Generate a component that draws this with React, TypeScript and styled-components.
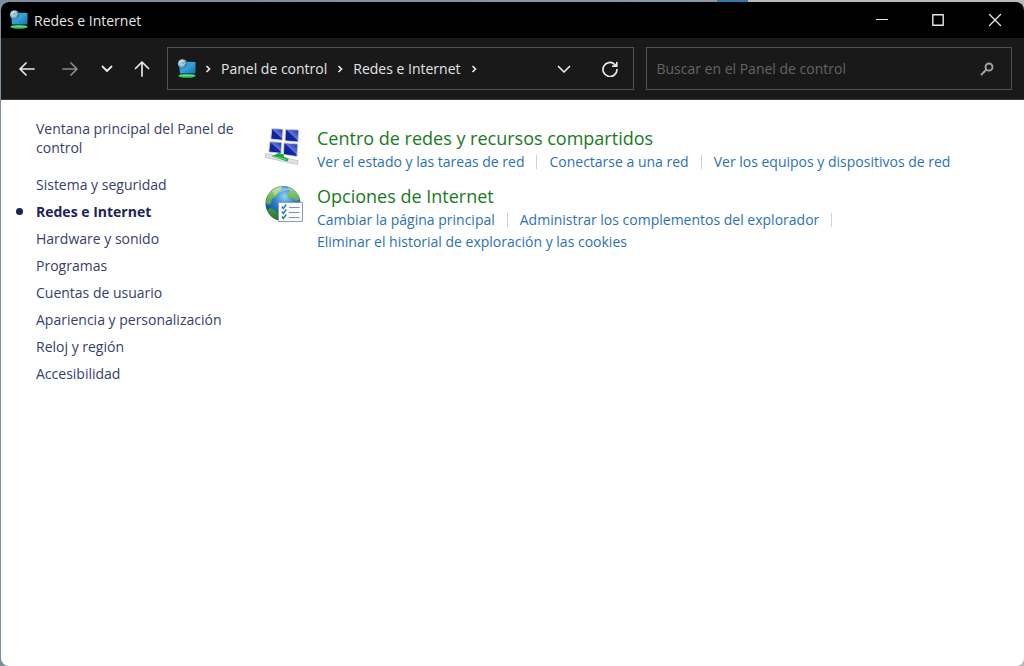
import React from "react";
import styled, { createGlobalStyle, css } from "styled-components";

const GlobalStyle = createGlobalStyle`
  * { box-sizing: border-box; }
  body { margin: 0; font-family: "Open Sans", "Noto Sans", sans-serif; font-size: 14px; }
  button, input { font: inherit; }
`;

const Desktop = styled.div`
  min-height: 100vh;
  display: flex;
  padding: 2px 0 0 1px;
  background: linear-gradient(90deg, #7b909c 0 20%, #8b9ba5 70%, #3079a8 70% 73%, #b8babc 73%);
`;

const Window = styled.div`
  flex: 1;
  min-width: 0;
  display: flex;
  flex-direction: column;
  border-radius: 8px;
  overflow: hidden;
  background: #fff;
`;

const TitleBar = styled.header`
  display: flex;
  align-items: center;
  height: 36px;
  padding-left: 8px;
  background: #000;
  color: #e4e4e4;
`;

const Title = styled.h1`
  flex: 1;
  margin: 0 0 0 5px;
  font-size: 14px;
  font-weight: 400;
`;

const IconButton = styled.button<{ $width: number; $color?: string }>`
  display: flex;
  align-items: center;
  justify-content: center;
  flex: none;
  width: ${(p) => p.$width}px;
  height: 36px;
  padding: 0;
  border: 0;
  background: transparent;
  color: ${(p) => p.$color ?? "#e8e8e8"};
`;

const Toolbar = styled.div`
  display: flex;
  align-items: center;
  height: 62px;
  padding: 0 12px 0 8px;
  background: #191919;
  border-bottom: 1px solid #3a3a3a;
`;

const Navigation = styled.nav`
  display: flex;
  flex: none;
  width: 158px;
`;

const field = css`
  display: flex;
  align-items: center;
  min-width: 0;
  height: 43px;
  border: 1px solid #535353;
`;

const AddressBar = styled.div`
  ${field}
  flex: 468 1 468px;
  padding: 0 0 0 9px;
  color: #e4e4e4;
`;

const Crumbs = styled.nav`
  display: flex;
  flex: 1;
  align-items: center;
  gap: 9px;
  margin-left: 7px;
  white-space: nowrap;
`;

const Crumb = styled.a`
  color: inherit;
  text-decoration: none;
`;

const SearchBox = styled.form`
  ${field}
  flex: 366 1 366px;
  margin-left: 12px;
  padding: 0 6px 0 9px;
`;

const SearchInput = styled.input`
  flex: 1;
  min-width: 0;
  padding: 0;
  border: 0;
  outline: 0;
  background: transparent;
  color: #e4e4e4;
  &::placeholder { color: #646464; opacity: 1; }
`;

const Body = styled.div`
  display: flex;
  flex: 1;
`;

const Sidebar = styled.nav`
  flex: none;
  width: 264px;
  padding: 19px 24px 0 35px;
  line-height: 19px;
`;

const SideLink = styled.a`
  color: #36406c;
  text-decoration: none;
`;

const SideList = styled.ul`
  margin: 14px 0 0;
  padding: 0;
  list-style: none;
`;

const SideItem = styled.li<{ $active?: boolean }>`
  display: flex;
  align-items: center;
  height: 27px;
  ${(p) =>
    p.$active &&
    css`
      margin-left: -20px;
      font-weight: 700;
      &::before {
        content: "";
        width: 7px;
        height: 7px;
        margin-right: 13px;
        border-radius: 50%;
        background: #1c2358;
      }
      ${SideLink} { color: #1c2358; }
    `}
`;

const Content = styled.main`
  flex: 1;
  min-width: 0;
  padding: 25px 60px 24px 0;
`;

const Category = styled.section`
  display: grid;
  grid-template-columns: 40px 1fr;
  column-gap: 12px;
  margin-bottom: 10px;
`;

const CategoryIcon = styled.div`
  padding-top: 2px;
`;

const CategoryTitle = styled.h2`
  margin: 0;
  font-size: 18px;
  font-weight: 400;
  line-height: 26px;
`;

const CategoryLink = styled.a`
  color: #187a1e;
  text-decoration: none;
`;

const Tasks = styled.ul`
  display: flex;
  flex-wrap: wrap;
  margin: 0;
  padding: 0;
  list-style: none;
  line-height: 22px;
`;

const Task = styled.li`
  display: flex;
  align-items: center;
  &:not(:last-child)::after {
    content: "";
    width: 1px;
    height: 14px;
    margin: 0 12px;
    background: #cfd3d8;
  }
`;

const TaskLink = styled.a`
  color: #2a72b5;
  text-decoration: none;
`;

const PanelIcon = () => (
  <svg width="20" height="20" viewBox="0 0 20 20" aria-hidden="true">
    <defs>
      <linearGradient id="screen" x1="0" y1="0" x2="1" y2="1">
        <stop offset="0" stopColor="#2f9fcb" />
        <stop offset=".5" stopColor="#2da5dc" />
        <stop offset="1" stopColor="#1a6ea6" />
      </linearGradient>
      <radialGradient id="ball" cx=".4" cy=".35" r=".7">
        <stop offset="0" stopColor="#e4f4f8" />
        <stop offset=".6" stopColor="#86b4ca" />
        <stop offset="1" stopColor="#2a6488" />
      </radialGradient>
    </defs>
    <path d="M2 2.500 18.500 3v11.500H3z" fill="url(#screen)" />
    <circle cx="5.500" cy="4.800" r="4.600" fill="url(#ball)" />
    <path d="M4 4.500c1-1.500 2-1 2.500 0M8 2.500l1.500 2L8 7" fill="none" stroke="#2b6e94" strokeWidth="1" />
    <ellipse cx="10" cy="16.800" rx="8.800" ry="1.900" fill="#35bf58" />
    <path d="M3 16.300h14" stroke="#8be8a0" strokeWidth=".8" />
  </svg>
);

const Chevron = () => (
  <svg width="8" height="10" viewBox="0 0 8 10" aria-hidden="true">
    <path d="m2.500 2 3 3-3 3" fill="none" stroke="#e4e4e4" strokeWidth="1.700" />
  </svg>
);

const Stroke = ({ d, size = 16, width = 1.5 }: { d: string; size?: number; width?: number }) => (
  <svg width={size} height={size} viewBox="0 0 16 16" aria-hidden="true">
    <path d={d} fill="none" stroke="currentColor" strokeWidth={width} strokeLinecap="round" strokeLinejoin="round" />
  </svg>
);

const NetworkIcon = () => (
  <svg width="40" height="40" viewBox="0 0 40 40" aria-hidden="true">
    <defs>
      <linearGradient id="pane" x1="0" y1="1" x2="1" y2="0">
        <stop offset="0" stopColor="#0d1a8c" />
        <stop offset=".5" stopColor="#1426a6" />
        <stop offset=".56" stopColor="#5c78d8" />
        <stop offset="1" stopColor="#1a2a98" />
      </linearGradient>
    </defs>
    <g fill="url(#pane)" stroke="#c9d0e4" strokeWidth=".9" strokeLinejoin="round">
      <path d="M6.800 1.500 18 2.200l-.6 11L5.800 12z" />
      <path d="m20.500 2.300 13.200.7-.7 12-13-1.200z" />
      <path d="m5 14.500 11.800 1-.7 10.800L3.800 25z" />
      <path d="m19 15.800 13.800 1.200-.8 12.500-13.600-2z" />
    </g>
    <path d="m1 26.500 32 7.200-.6 3.800L.4 30.500z" fill="#dfe3e4" stroke="#a9b1b5" strokeWidth=".6" />
    <path d="m6.500 29.200 4-1.700 3-1.500 5 1.300.5 2.500 4.500 2-1 2.800z" fill="#1ea843" />
    <path d="m8.500 29.500 13 3" stroke="#6fe084" strokeWidth="1" />
  </svg>
);

const InternetIcon = () => (
  <svg width="40" height="40" viewBox="0 0 40 40" aria-hidden="true">
    <defs>
      <radialGradient id="sea" cx=".55" cy=".3" r=".7">
        <stop offset="0" stopColor="#8ed4f4" />
        <stop offset=".45" stopColor="#2c80cc" />
        <stop offset="1" stopColor="#123f86" />
      </radialGradient>
      <linearGradient id="land" x1="0" y1="0" x2="0" y2="1">
        <stop offset="0" stopColor="#a5d37a" />
        <stop offset=".6" stopColor="#46a043" />
        <stop offset="1" stopColor="#24762c" />
      </linearGradient>
    </defs>
    <circle cx="18" cy="18.500" r="17.500" fill="url(#sea)" />
    <path d="M3 10c3-5 8-9 14-9l-1 4-3 2-1 4-5 3-1 4-3 2-2-2c0-3 1-6 2-8zM2 25l4-2 4 2 3 4v6C8 34 4 30 2 25zM23 2c6 2 10 6 12 12l-4 2-3-3-4 1-2-5 3-3z" fill="url(#land)" />
    <path d="M7 6.500c5-5 14-6 20-1-7-1-12 1-17 5z" fill="#fff" opacity=".35" />
    <path d="M13.500 17.500h24v19h-24z" fill="#f8fafb" stroke="#929ba3" />
    <path d="M24 22.500h10.500M24 27.500h10.500M24 32.500h10.500" stroke="#8a8fa0" strokeWidth="1.200" />
    <path d="m17 21.500 1.300 2 3-4m-4.300 7 1.300 2 3-4m-4.300 7 1.300 2 3-4" fill="none" stroke="#2479be" strokeWidth="1.400" />
  </svg>
);

const sections = [
  "Sistema y seguridad",
  "Redes e Internet",
  "Hardware y sonido",
  "Programas",
  "Cuentas de usuario",
  "Apariencia y personalización",
  "Reloj y región",
  "Accesibilidad",
];

const categories = [
  {
    title: "Centro de redes y recursos compartidos",
    icon: <NetworkIcon />,
    tasks: ["Ver el estado y las tareas de red", "Conectarse a una red", "Ver los equipos y dispositivos de red"],
  },
  {
    title: "Opciones de Internet",
    icon: <InternetIcon />,
    tasks: [
      "Cambiar la página principal",
      "Administrar los complementos del explorador",
      "Eliminar el historial de exploración y las cookies",
    ],
  },
];

export default function App() {
  return (
    <>
      <GlobalStyle />
      <Desktop>
        <Window>
          <TitleBar>
            <PanelIcon />
            <Title>Redes e Internet</Title>
            <IconButton $width={56} aria-label="Minimizar"><Stroke d="M2.500 7.500h11" width={1} /></IconButton>
            <IconButton $width={56} aria-label="Maximizar"><Stroke d="M2.800 2.800h10.400v10.400H2.800z" width={1.4} /></IconButton>
            <IconButton $width={58} aria-label="Cerrar"><Stroke d="m2.500 2.500 11 11m0-11-11 11" width={1.3} /></IconButton>
          </TitleBar>
          <Toolbar>
            <Navigation aria-label="Historial">
              <IconButton $width={36} aria-label="Atrás"><Stroke d="M15 8H1m6-6L1 8l6 6" width={1.7} /></IconButton>
              <IconButton $width={50} $color="#8b8b8b" aria-label="Adelante"><Stroke d="M1 8h14M9 2l6 6-6 6" width={1.7} /></IconButton>
              <IconButton $width={24} aria-label="Ubicaciones recientes"><Stroke d="m3.500 5.500 4.500 4.500 4.500-4.500" width={1.8} /></IconButton>
              <IconButton $width={46} aria-label="Subir"><Stroke d="M8 15V1M1.500 7.500 8 1l6.500 6.500" width={1.7} /></IconButton>
            </Navigation>
            <AddressBar>
              <PanelIcon />
              <Crumbs aria-label="Ruta">
                <Chevron />
                <Crumb href="#panel">Panel de control</Crumb>
                <Chevron />
                <Crumb href="#redes">Redes e Internet</Crumb>
                <Chevron />
              </Crumbs>
              <IconButton $width={46} aria-label="Ubicaciones anteriores"><Stroke d="m2.500 5.500 5.500 5.500 5.500-5.500" width={1.7} /></IconButton>
              <IconButton $width={46} aria-label="Actualizar"><Stroke d="M15 8.500a7 7 0 1 1-2.300-5.200L14.500 5M14.800 1.500V5.200h-4" width={1.7} /></IconButton>
            </AddressBar>
            <SearchBox role="search">
              <SearchInput aria-label="Buscar" placeholder="Buscar en el Panel de control" />
              <IconButton $width={36} $color="#a2a2a2" type="button" aria-label="Buscar"><Stroke d="M6.500 6a3.500 3.500 0 1 1 7 0a3.500 3.500 0 1 1-7 0M7.500 8.500 2.500 13.500" width={1.9} /></IconButton>
            </SearchBox>
          </Toolbar>
          <Body>
            <Sidebar aria-label="Categorías">
              <SideLink href="#inicio">Ventana principal del Panel de control</SideLink>
              <SideList>
                {sections.map((name) => (
                  <SideItem key={name} $active={name === "Redes e Internet"}>
                    <SideLink href="#seccion">{name}</SideLink>
                  </SideItem>
                ))}
              </SideList>
            </Sidebar>
            <Content>
              {categories.map(({ title, icon, tasks }) => (
                <Category key={title}>
                  <CategoryIcon>{icon}</CategoryIcon>
                  <div>
                    <CategoryTitle><CategoryLink href="#categoria">{title}</CategoryLink></CategoryTitle>
                    <Tasks>
                      {tasks.map((task) => (
                        <Task key={task}><TaskLink href="#tarea">{task}</TaskLink></Task>
                      ))}
                    </Tasks>
                  </div>
                </Category>
              ))}
            </Content>
          </Body>
        </Window>
      </Desktop>
    </>
  );
}
